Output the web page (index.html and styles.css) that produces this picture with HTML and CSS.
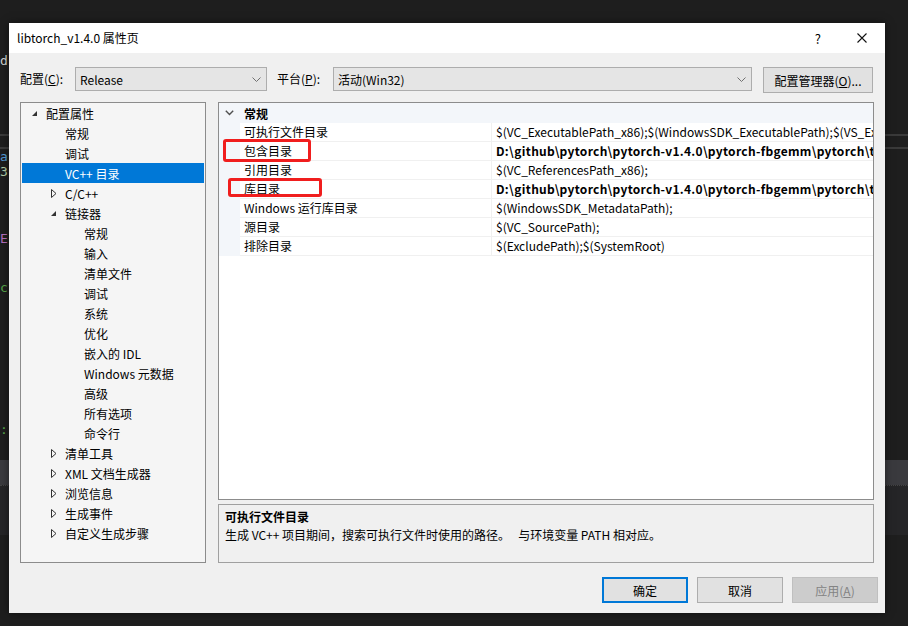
FILE: index.html
```html
<!DOCTYPE html>
<html lang="zh-CN">
<head>
    <meta charset="UTF-8">
    <title>libtorch_v1.4.0 属性页</title>
    <link rel="stylesheet" href="styles.css">
</head>
<body>
    <!-- 背后的代码编辑器 -->
    <div class="editor">
        <div class="ed-line ed-line-1"></div>
        <div class="ed-line ed-line-2"></div>
        <div class="ed-panel"></div>
        <div class="ed-status"></div>
        <span class="ed-ch ed-plain" style="top:55px">d</span>
        <span class="ed-ch ed-blue" style="top:151px">a</span>
        <span class="ed-ch ed-num" style="top:166px">3</span>
        <span class="ed-ch ed-purple" style="top:233px">E</span>
        <span class="ed-ch ed-green" style="top:282px">c</span>
        <span class="ed-ch ed-green" style="top:424px">:</span>
    </div>

    <div class="dialog">
        <div class="titlebar">
            <span class="title">libtorch_v1.4.0 属性页</span>
            <span class="help">?</span>
            <svg class="close" width="10" height="10" viewBox="0 0 10 10"><path d="M0.5 0.5 L9.5 9.5 M9.5 0.5 L0.5 9.5" stroke="#111" stroke-width="1.1" fill="none"/></svg>
        </div>

        <div class="content">
            <div class="toolbar">
                <label class="label">配置(<u>C</u>):</label>
                <div class="combo combo-config">
                    <span>Release</span>
                    <svg width="9" height="5" viewBox="0 0 9 5"><path d="M0.5 0.5 L4.5 4.5 L8.5 0.5" stroke="#707070" fill="none"/></svg>
                </div>
                <label class="label label-platform">平台(<u>P</u>):</label>
                <div class="combo combo-platform">
                    <span>活动(Win32)</span>
                    <svg width="9" height="5" viewBox="0 0 9 5"><path d="M0.5 0.5 L4.5 4.5 L8.5 0.5" stroke="#707070" fill="none"/></svg>
                </div>
                <button class="manager">配置管理器(<u>O</u>)...</button>
            </div>

            <div class="main">
                <ul class="tree">
                    <li class="node lv0"><i class="open"></i>配置属性</li>
                    <li class="node lv1"><i></i>常规</li>
                    <li class="node lv1"><i></i>调试</li>
                    <li class="node lv1 selected"><i></i>VC++ 目录</li>
                    <li class="node lv1"><i class="shut"></i>C/C++</li>
                    <li class="node lv1"><i class="open"></i>链接器</li>
                    <li class="node lv2"><i></i>常规</li>
                    <li class="node lv2"><i></i>输入</li>
                    <li class="node lv2"><i></i>清单文件</li>
                    <li class="node lv2"><i></i>调试</li>
                    <li class="node lv2"><i></i>系统</li>
                    <li class="node lv2"><i></i>优化</li>
                    <li class="node lv2"><i></i>嵌入的 IDL</li>
                    <li class="node lv2"><i></i>Windows 元数据</li>
                    <li class="node lv2"><i></i>高级</li>
                    <li class="node lv2"><i></i>所有选项</li>
                    <li class="node lv2"><i></i>命令行</li>
                    <li class="node lv1"><i class="shut"></i>清单工具</li>
                    <li class="node lv1"><i class="shut"></i>XML 文档生成器</li>
                    <li class="node lv1"><i class="shut"></i>浏览信息</li>
                    <li class="node lv1"><i class="shut"></i>生成事件</li>
                    <li class="node lv1"><i class="shut"></i>自定义生成步骤</li>
                </ul>

                <div class="side">
                    <div class="grid">
                        <div class="grid-head">
                            <span class="head-arrow">
                                <svg width="9" height="6" viewBox="0 0 9 6"><path d="M0.8 0.8 L4.5 4.5 L8.2 0.8" stroke="#505050" stroke-width="1.4" fill="none"/></svg>
                            </span>
                            <b>常规</b>
                        </div>
                        <div class="prop"><span class="gutter"></span><span class="name">可执行文件目录</span><span class="value">$(VC_ExecutablePath_x86);$(WindowsSDK_ExecutablePath);$(VS_Ex</span></div>
                        <div class="prop"><span class="gutter"></span><span class="name">包含目录</span><span class="value bold">D:\github\pytorch\pytorch-v1.4.0\pytorch-fbgemm\pytorch\t</span></div>
                        <div class="prop"><span class="gutter"></span><span class="name">引用目录</span><span class="value">$(VC_ReferencesPath_x86);</span></div>
                        <div class="prop"><span class="gutter"></span><span class="name">库目录</span><span class="value bold">D:\github\pytorch\pytorch-v1.4.0\pytorch-fbgemm\pytorch\t</span></div>
                        <div class="prop"><span class="gutter"></span><span class="name">Windows 运行库目录</span><span class="value">$(WindowsSDK_MetadataPath);</span></div>
                        <div class="prop"><span class="gutter"></span><span class="name">源目录</span><span class="value">$(VC_SourcePath);</span></div>
                        <div class="prop"><span class="gutter"></span><span class="name">排除目录</span><span class="value">$(ExcludePath);$(SystemRoot)</span></div>

                        <!-- 红框标注 -->
                        <div class="mark mark-include"></div>
                        <div class="mark mark-lib"></div>
                    </div>
                    <div class="desc">
                        <div class="desc-title">可执行文件目录</div>
                        <div class="desc-text">生成 VC++ 项目期间，搜索可执行文件时使用的路径。&nbsp;&nbsp;&nbsp;与环境变量 PATH 相对应。</div>
                    </div>
                </div>
            </div>

            <div class="buttons">
                <button class="btn btn-default">确定</button>
                <button class="btn">取消</button>
                <button class="btn btn-disabled">应用(<u>A</u>)</button>
            </div>
        </div>
    </div>
</body>
</html>
```

FILE: styles.css
```css
* {
    margin: 0;
    padding: 0;
    box-sizing: border-box;
}

body {
    width: 908px;
    height: 626px;
    overflow: hidden;
    position: relative;
    background-color: #1e1e1e;
    padding: 23px 0 0 9px;
    font-family: "Noto Sans CJK SC", "Noto Sans", sans-serif;
    font-size: 12px;
    color: #000;
}

/* editor behind the dialog */
.editor {
    position: absolute;
    left: 0;
    top: 0;
    width: 908px;
    height: 626px;
}

.ed-line {
    position: absolute;
    left: 0;
    width: 100%;
    height: 2px;
    background-color: #3a3a3a;
}

.ed-line-1 { top: 134px; }
.ed-line-2 { top: 147px; }

.ed-panel {
    position: absolute;
    left: 0;
    top: 460px;
    width: 100%;
    height: 25px;
    background-color: #3a3a3e;
}

.ed-status {
    position: absolute;
    left: 0;
    top: 485px;
    width: 100%;
    height: 50px;
    background-color: #252527;
    border-top: 1px dotted #444;
}

.ed-ch {
    position: absolute;
    left: 0;
    font-family: "DejaVu Sans Mono", monospace;
    font-size: 13px;
    line-height: 11px;
}

.ed-plain { color: #d4d4d4; }
.ed-blue { color: #569cd6; }
.ed-num { color: #b5cea8; }
.ed-purple { color: #b46fbe; }
.ed-green { color: #57a64a; }

/* dialog */
.dialog {
    position: relative;
    width: 876px;
    height: 590px;
    background-color: #f0f0f0;
    display: flex;
    flex-direction: column;
    box-shadow: 0 0 8px rgba(0, 0, 0, 0.5);
}

.titlebar {
    height: 30px;
    background-color: #fff;
    display: flex;
    align-items: center;
    padding-left: 8px;
}

.title {
    flex: 1;
    line-height: 30px;
}

.help {
    font-size: 13px;
    margin-right: 36px;
}

.close {
    margin-right: 18px;
}

.content {
    flex: 1;
    display: flex;
    flex-direction: column;
    padding: 14px 11px 10px;
}

u {
    text-decoration: underline;
    text-underline-offset: 1px;
}

button {
    font-family: inherit;
    font-size: 12px;
    color: #000;
}

.toolbar {
    display: flex;
    align-items: flex-start;
    height: 26px;
}

.label {
    width: 55px;
    flex: none;
    line-height: 24px;
}

.label-platform {
    width: 56px;
    margin-left: 10px;
}

.combo {
    height: 24px;
    flex: none;
    border: 1px solid #adadad;
    background-color: #e5e5e5;
    display: flex;
    align-items: center;
    justify-content: space-between;
    padding: 0 5px 0 4px;
}

.combo-config { width: 192px; }
.combo-platform { width: 419px; }

.manager {
    width: 110px;
    height: 26px;
    flex: none;
    margin-left: 11px;
    border: 1px solid #adadad;
    background-color: #e1e1e1;
}

.main {
    margin-top: 9px;
    height: 461px;
    display: flex;
    gap: 12px;
}

/* left tree */
.tree {
    width: 186px;
    flex: none;
    list-style: none;
    border: 1px solid #8c8c8c;
    background-color: #f5f5f5;
}

.node {
    height: 20px;
    margin: 0 1px;
    display: flex;
    align-items: center;
    white-space: nowrap;
}

.lv0 { padding-left: 9px; }
.lv1 { padding-left: 28px; }
.lv2 { padding-left: 47px; }

.node i {
    width: 15px;
    height: 20px;
    flex: none;
    position: relative;
}

.node i.open::before {
    content: "";
    position: absolute;
    left: 1px;
    top: 8px;
    border-style: solid;
    border-width: 0 0 5px 5px;
    border-color: transparent transparent #333 transparent;
}

.node i.shut::before {
    content: "";
    position: absolute;
    left: 1px;
    top: 6px;
    width: 6px;
    height: 9px;
    background: no-repeat center / 6px 9px url("data:image/svg+xml,%3Csvg xmlns='http://www.w3.org/2000/svg' width='6' height='9'%3E%3Cpath d='M0.5 0.5 L5 4.5 L0.5 8.5 Z' fill='none' stroke='%23333'/%3E%3C/svg%3E");
}

.selected {
    background-color: #0078d7;
    color: #fff;
}

/* property grid */
.side {
    flex: 1;
    min-width: 0;
    display: flex;
    flex-direction: column;
    gap: 4px;
}

.grid {
    position: relative;
    height: 398px;
    border: 1px solid #8c8c8c;
    background-color: #fff;
    overflow: hidden;
}

.grid-head {
    height: 20px;
    display: flex;
    align-items: center;
    background-color: #f3f6fa;
}

.head-arrow {
    width: 25px;
    padding-left: 6px;
    display: flex;
    align-items: center;
}

.prop {
    height: 19px;
    display: flex;
}

.gutter {
    width: 21px;
    flex: none;
    background-color: #f3f6fa;
}

.name, .value {
    line-height: 18px;
    padding-left: 4px;
    border-bottom: 1px solid #f0f0f0;
    white-space: nowrap;
    overflow: hidden;
}

.name {
    width: 252px;
    flex: none;
    border-right: 1px solid #f0f0f0;
}

.value {
    flex: 1;
    min-width: 0;
}

.bold {
    font-weight: bold;
    letter-spacing: 0.3px;
}

.mark {
    position: absolute;
    border: 3px solid #f01e1e;
    border-radius: 3px;
}

.mark-include {
    left: 4px;
    top: 36px;
    width: 88px;
    height: 23px;
}

.mark-lib {
    left: 9px;
    top: 75px;
    width: 94px;
    height: 19px;
}

.desc {
    flex: 1;
    border: 1px solid #a0a0a0;
    padding: 3px 6px;
}

.desc-title {
    font-weight: bold;
    line-height: 18px;
}

.desc-text {
    line-height: 18px;
}

/* bottom buttons */
.buttons {
    margin-top: 14px;
    margin-right: -4px;
    display: flex;
    justify-content: flex-end;
    gap: 9px;
}

.btn {
    width: 86px;
    height: 26px;
    border: 1px solid #adadad;
    background-color: #e1e1e1;
}

.btn-default {
    border: 2px solid #0078d7;
}

.btn-disabled {
    background-color: #cccccc;
    border-color: #bfbfbf;
    color: #838383;
}
```
